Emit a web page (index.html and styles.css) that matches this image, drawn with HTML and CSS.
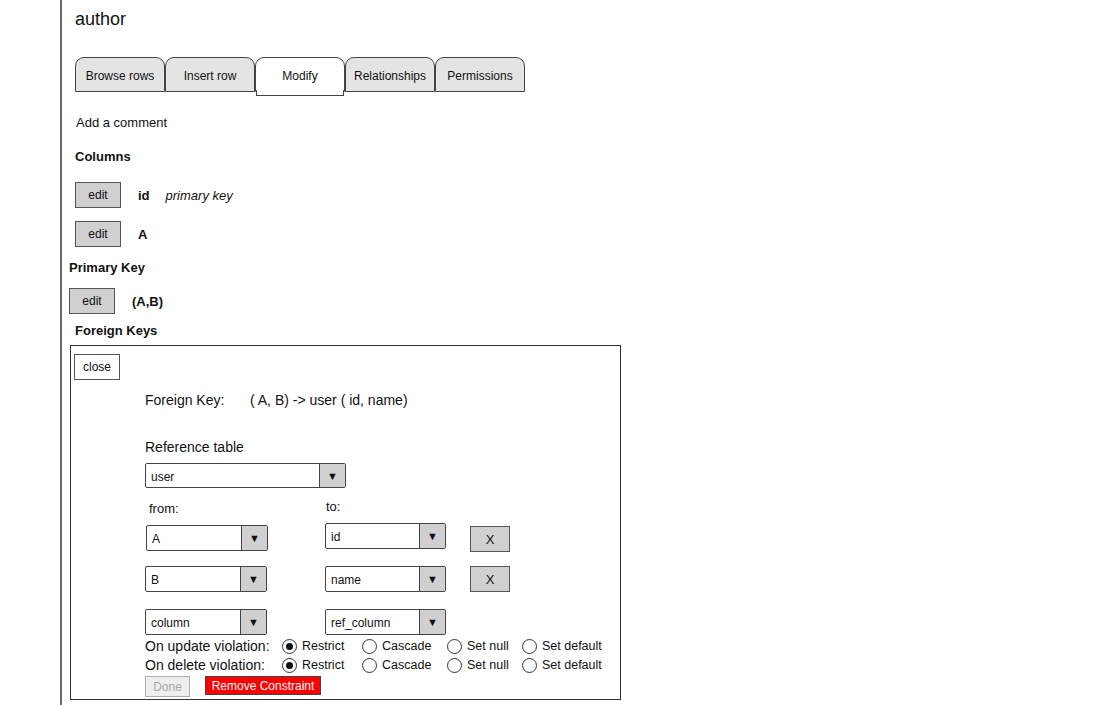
FILE: index.html
```html
<!DOCTYPE html>
<html>
<head>
<meta charset="utf-8">
<link rel="stylesheet" href="styles.css">
</head>
<body>
<div class="frame">
  <h1 class="title">author</h1>
  <div class="tabs">
    <div class="tab">Browse rows</div>
    <div class="tab">Insert row</div>
    <div class="tab active">Modify</div>
    <div class="tab">Relationships</div>
    <div class="tab">Permissions</div>
  </div>
  <div class="comment">Add a comment</div>
  <div class="section">Columns</div>
  <div class="row row-col1">
    <div class="btn gray">edit</div>
    <span class="name">id</span>
    <span class="note">primary key</span>
  </div>
  <div class="row row-col2">
    <div class="btn gray">edit</div>
    <span class="name">A</span>
  </div>
  <div class="section shift pk-title">Primary Key</div>
  <div class="row shift pk-row">
    <div class="btn gray">edit</div>
    <span class="name">(A,B)</span>
  </div>
  <div class="section fk-title">Foreign Keys</div>
  <div class="panel">
    <div class="btn white">close</div>
    <div class="fk-body">
      <div class="fk-line"><span class="fk-label">Foreign Key:</span><span>( A, B) -&gt; user ( id, name)</span></div>
      <div class="reflabel">Reference table</div>
      <div class="select wide"><span class="val">user</span><span class="arrow">&#9660;</span></div>
      <div class="grid">
        <div class="head from">from:</div>
        <div class="head to">to:</div>
        <div></div>
        <div class="select c1 r1"><span class="val">A</span><span class="arrow">&#9660;</span></div>
        <div class="select c2"><span class="val">id</span><span class="arrow">&#9660;</span></div>
        <div class="btn gray xbtn r1c">X</div>
        <div class="select c1"><span class="val">B</span><span class="arrow">&#9660;</span></div>
        <div class="select c2"><span class="val">name</span><span class="arrow">&#9660;</span></div>
        <div class="btn gray xbtn">X</div>
        <div class="select c1"><span class="val">column</span><span class="arrow">&#9660;</span></div>
        <div class="select c2"><span class="val">ref_column</span><span class="arrow">&#9660;</span></div>
        <div></div>
      </div>
      <div class="viol first">
        <span class="vlabel">On update violation:</span>
        <span class="opt"><span class="radio on"></span>Restrict</span>
        <span class="opt"><span class="radio"></span>Cascade</span>
        <span class="opt"><span class="radio"></span>Set null</span>
        <span class="opt"><span class="radio"></span>Set default</span>
      </div>
      <div class="viol">
        <span class="vlabel">On delete violation:</span>
        <span class="opt"><span class="radio on"></span>Restrict</span>
        <span class="opt"><span class="radio"></span>Cascade</span>
        <span class="opt"><span class="radio"></span>Set null</span>
        <span class="opt"><span class="radio"></span>Set default</span>
      </div>
      <div class="actions">
        <div class="btn done">Done</div>
        <div class="btn danger">Remove Constraint</div>
      </div>
    </div>
  </div>
</div>
</body>
</html>
```
FILE: styles.css
```css
* { box-sizing: border-box; }
html, body { margin: 0; padding: 0; background: #fff; }
body {
  font-family: "Liberation Sans", Arial, sans-serif;
  color: #111;
  width: 1106px;
  height: 705px;
  overflow: hidden;
}
.frame {
  margin-left: 60px;
  border-left: 2px solid #6a6a6a;
  height: 705px;
  padding: 8px 0 0 13px;
}
.title {
  margin: 0;
  font-size: 18px;
  font-weight: normal;
  line-height: 22px;
  height: 22px;
}
.tabs {
  display: flex;
  margin-top: 27px;
  height: 36px;
}
.tab {
  width: 90px;
  height: 35px;
  border: 1.5px solid #444;
  border-radius: 9px 9px 0 0;
  background: #e4e4e4;
  font-size: 12px;
  display: flex;
  align-items: center;
  justify-content: center;
  padding-top: 2px;
  position: relative;
}
.tab.active { background: #fff; }
.tab.active::after {
  content: "";
  position: absolute;
  left: 0;
  right: 0;
  bottom: -5px;
  height: 5px;
  border: 1.5px solid #444;
  border-top: none;
  background: #fff;
}
.comment {
  margin-top: 22px;
  font-size: 13px;
  line-height: 16px;
  margin-left: 1px;
}
.section {
  font-size: 13px;
  font-weight: bold;
  line-height: 16px;
  margin-top: 18px;
}
.row {
  display: flex;
  align-items: center;
  gap: 17px;
  font-size: 13px;
}
.row-col1 { margin-top: 17px; }
.row-col2 { margin-top: 13px; }
.name { font-weight: bold; }
.note { font-style: italic; margin-left: -1px; }
.shift { margin-left: -6px; }
.pk-title { margin-top: 13px; }
.pk-row { margin-top: 12px; }
.fk-title { margin-top: 9px; }
.btn {
  width: 46px;
  height: 26px;
  border: 1.5px solid #555;
  font-size: 12px;
  display: flex;
  align-items: center;
  justify-content: center;
  flex: none;
}
.btn.gray { background: #d0d0d0; }
.btn.white { background: #fff; }
.panel {
  margin-top: 6px;
  margin-left: -5px;
  width: 551px;
  height: 355px;
  border: 1.5px solid #333;
  padding: 8px 0 0 3px;
}
.fk-body {
  padding-left: 71px;
  font-size: 14px;
}
.fk-line {
  margin-top: 11px;
  line-height: 18px;
  display: flex;
}
.fk-label { width: 105px; }
.reflabel {
  margin-top: 29px;
  line-height: 18px;
}
.select {
  display: flex;
  height: 26px;
  border: 1.5px solid #444;
  border-radius: 2px;
  background: #fff;
  font-size: 12px;
}
.select .val {
  flex: 1;
  display: flex;
  align-items: center;
  padding-left: 5px;
  padding-top: 2px;
}
.select .arrow {
  width: 26px;
  background: #d0d0d0;
  border-left: 1.5px solid #444;
  display: flex;
  align-items: center;
  justify-content: center;
  font-size: 11px;
}
.select.wide { width: 201px; margin-top: 7px; height: 25px; }
.grid {
  display: grid;
  grid-template-columns: 180px 145px 40px;
  row-gap: 17px;
  margin-top: 11px;
}
.head { font-size: 13px; line-height: 16px; margin-bottom: -11px; }
.head.from { padding-left: 4px; padding-top: 2px; }
.head.to { padding-left: 1px; }
.c1 { width: 122px; }
.c2 { width: 121px; }
.r1 { margin-left: 1px; margin-top: 2px; margin-bottom: -2px; }
.r1c { margin-top: 3px; margin-bottom: -3px; }
.xbtn { width: 40px; height: 26px; font-size: 13px; }
.viol {
  display: flex;
  align-items: center;
  font-size: 14px;
  line-height: 19px;
  height: 19px;
}
.viol.first { margin-top: 2px; }
.vlabel { width: 137px; }
.opt {
  display: flex;
  align-items: center;
  font-size: 12.5px;
}
.opt:nth-child(2) { width: 80px; }
.opt:nth-child(3) { width: 85px; }
.opt:nth-child(4) { width: 75px; }
.radio {
  width: 15px;
  height: 15px;
  border: 1.5px solid #333;
  border-radius: 50%;
  margin-right: 5px;
  position: relative;
  flex: none;
}
.radio.on::after {
  content: "";
  position: absolute;
  left: 2.5px;
  top: 2.5px;
  width: 7px;
  height: 7px;
  border-radius: 50%;
  background: #111;
}
.actions {
  display: flex;
  gap: 15px;
  margin-top: 1px;
}
.btn.done {
  width: 45px;
  height: 21px;
  border-color: #b0b0b0;
  color: #a8a8a8;
  background: #eee;
}
.btn.danger {
  width: 116px;
  height: 19px;
  background: #ff0000;
  color: #fff;
  border-color: #444;
}
```
